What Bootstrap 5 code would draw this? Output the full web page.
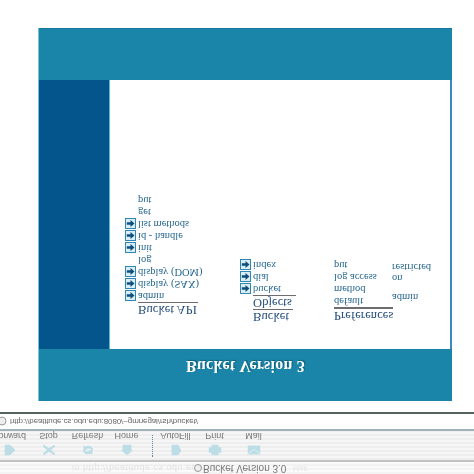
<!DOCTYPE html>
<html lang="en">
<head>
<meta charset="utf-8">
<title>Bucket Version 3.0</title>
<link href="https://cdn.jsdelivr.net/npm/bootstrap@5.3.0/dist/css/bootstrap.min.css" rel="stylesheet">
<style>
html,body{margin:0;height:474px;overflow:hidden;background:#fff}
.flip-page{height:474px;width:474px;overflow:hidden;transform:scaleY(-1);filter:blur(.35px);font-family:"Liberation Sans",sans-serif}
.title-strip{height:12px;background:repeating-linear-gradient(#f3f3f3 0 2px,#fafafa 2px 4px);font-size:10px;line-height:12px;color:#777;padding-left:72px;white-space:nowrap}
.ghost{color:#e2e2e2;width:121px;font-size:9px;letter-spacing:.5px;flex:none}
.ghost-end{color:#e6e6e6;margin-left:6px;font-size:8px}
.line-a{height:2px;background:#c2c2c2}
.tool-strip{height:29px;background:repeating-linear-gradient(#eeeeee 0 2px,#f6f6f6 2px 4px)}
.tool-row{margin-left:-10px}
.tool-item{width:39px;height:29px;font-size:9px;line-height:10px;color:#777;text-align:center;flex:none}
.tool-item svg{display:block;margin:3px auto 2px;width:16px;height:14px;fill:#bcdde5}
.tool-sep{width:10px;flex:none}
.tool-sep::after{content:"";display:block;width:0;height:22px;margin:3px 0 0 6px;border-left:1px dotted #5b8aa0}
.line-b{height:2px;background:#9fb3b8}
.addr{height:15px;background:#fff;font-size:8px;line-height:15px;color:#666;white-space:nowrap;letter-spacing:-.1px}
.addr svg{width:10px;height:10px;margin-left:-3px;margin-right:3px;flex:none}
.line-c{height:2px;background:#55605f}
.gap-w{height:11px}
.shell{margin-left:38px;width:414px;height:373px;border-left:1px solid #6fc4d8}
.shell-foot{height:51px;background:#1a85a8;color:#fff;font-family:"Liberation Serif",serif;font-weight:700;font-size:16px;line-height:16px;padding-bottom:8px;letter-spacing:.2px;text-shadow:1px 1px 1px #0d5c78}
.shell-main{height:270px;border-top:1px solid #1a85a8}
.side-bar{width:71px;background:#04558c;flex:none;border-right:1px solid #5fb6d8}
.pane{flex:1 1 auto;background:#fff;border-right:2px solid #3c88c0;padding:25px 0 0 15px;font-family:"Liberation Serif",serif;font-size:10.500px;letter-spacing:0;line-height:12px;color:#27678f}
.shell-top{height:52px;background:#1a85a8;border-bottom:1px solid #177a9c}
.head-t{font-size:12.500px;color:#1f4977;line-height:14px;border-bottom:1px solid #6d6d70;display:block;white-space:nowrap;letter-spacing:.1px}
.col-one{width:115px;margin-top:7px}
.col-two{width:94px}
.col-three{width:58px}
.head-indent{margin-left:13px}
.head-one{width:60px}
.head-two{width:40px}
.head-obj{width:43px;line-height:13px}
.head-pref{width:59px;margin-top:2px;line-height:13px;border-bottom-width:2px}
.lnk{height:12px;white-space:nowrap}
.plain{padding-left:13px}
.arr{width:11px;height:11px;margin-right:2px;flex:none}
.pref-val{padding-top:4px}
.pref-val .lnk:nth-child(2){margin-top:7px}
.pref-val .lnk:nth-child(3){margin-top:-1px}
</style>
</head>
<body>
<div class="flip-page d-flex flex-column">
  <div class="title-strip d-flex">
    <span class="ghost">in http://beatitude.cs.odu.edu</span>
    <svg width="10" height="12" viewBox="0 0 10 12"><circle cx="5" cy="6" r="3.500" fill="#eee" stroke="#999"/></svg>
    <span>Bucket Version 3.0</span><span class="ghost-end">Mail</span>
  </div>
  <div class="line-a"></div>
  <div class="tool-strip">
    <div class="tool-row d-flex">
      <div class="tool-item"><svg viewBox="0 0 18 14"><path d="M3 1h6l6 6-6 6H3z"/></svg>Forward</div>
      <div class="tool-item"><svg viewBox="0 0 18 14"><path d="M3 1l6 4 6-4 1 2-5 4 5 4-1 2-6-4-6 4-1-2 5-4-5-4z"/></svg>Stop</div>
      <div class="tool-item"><svg viewBox="0 0 18 14"><path d="M3 7a6 5 0 0 1 9-4l2-1v5h-5l2-1a4 3 0 0 0-6 1zM15 7a6 5 0 0 1-9 4l-2 1V7h5l-2 1a4 3 0 0 0 6-1z"/></svg>Refresh</div>
      <div class="tool-item"><svg viewBox="0 0 18 14"><path d="M9 1l7 6h-2v6H4V7H2z"/></svg>Home</div>
      <div class="tool-sep"></div>
      <div class="tool-item"><svg viewBox="0 0 18 14"><path d="M4 1h7l4 5-3 7H4z"/></svg>AutoFill</div>
      <div class="tool-item"><svg viewBox="0 0 18 14"><path d="M2 4h14v6H2zM5 1h8v3H5zM5 10h8v3H5z"/></svg>Print</div>
      <div class="tool-item"><svg viewBox="0 0 18 14"><path d="M2 2h14v10H2z"/><path d="M2 2l7 6 7-6" fill="none" stroke="#e2f0f4"/></svg>Mail</div>
    </div>
  </div>
  <div class="line-b"></div>
  <div class="addr d-flex align-items-center">
    <svg viewBox="0 0 10 10"><circle cx="5" cy="5" r="4" fill="#eee" stroke="#999"/></svg>
    <span>http://beatitude.cs.odu.edu:8080/~gmnegal/rsh/bucket/</span>
  </div>
  <div class="line-c"></div>
  <div class="gap-w"></div>
  <div class="shell d-flex flex-column">
    <div class="shell-foot d-flex align-items-end justify-content-center">Bucket Version 3</div>
    <div class="shell-main d-flex">
      <div class="side-bar"></div>
      <div class="pane d-flex align-items-start">
        <svg width="0" height="0" class="position-absolute"><defs><symbol id="go" viewBox="0 0 11 11"><rect x=".5" y=".5" width="10" height="10" fill="#d9eef5" stroke="#2f86b0"/><path d="M1.800 4.200h3.700V2L9.500 5.500 5.500 9V6.800H1.800z" fill="#0f4f7e"/></symbol></defs></svg>
        <div class="col-one">
          <span class="head-t head-indent head-one">Bucket API</span>
          <div class="lnk d-flex align-items-center"><svg class="arr"><use href="#go"/></svg>admin</div>
          <div class="lnk d-flex align-items-center"><svg class="arr"><use href="#go"/></svg>display (SAX)</div>
          <div class="lnk d-flex align-items-center"><svg class="arr"><use href="#go"/></svg>display (DOM)</div>
          <div class="lnk plain">log</div>
          <div class="lnk d-flex align-items-center"><svg class="arr"><use href="#go"/></svg>init</div>
          <div class="lnk d-flex align-items-center"><svg class="arr"><use href="#go"/></svg>id - handle</div>
          <div class="lnk d-flex align-items-center"><svg class="arr"><use href="#go"/></svg>list methods</div>
          <div class="lnk plain">get</div>
          <div class="lnk plain">put</div>
        </div>
        <div class="col-two">
          <span class="head-t head-indent head-two">Bucket</span>
          <span class="head-t head-indent head-obj">Objects</span>
          <div class="lnk d-flex align-items-center"><svg class="arr"><use href="#go"/></svg>bucket</div>
          <div class="lnk d-flex align-items-center"><svg class="arr"><use href="#go"/></svg>dial</div>
          <div class="lnk d-flex align-items-center"><svg class="arr"><use href="#go"/></svg>index</div>
        </div>
        <div>
          <span class="head-t head-pref">Preferences</span>
          <div class="d-flex">
            <div class="col-three">
              <div class="lnk">default</div>
              <div class="lnk">method</div>
              <div class="lnk">log access</div>
              <div class="lnk">put</div>
            </div>
            <div class="pref-val">
              <div class="lnk">admin</div>
              <div class="lnk">on</div>
              <div class="lnk">restricted</div>
            </div>
          </div>
        </div>
      </div>
    </div>
    <div class="shell-top"></div>
  </div>
</div>
<script src="https://cdn.jsdelivr.net/npm/bootstrap@5.3.0/dist/js/bootstrap.bundle.min.js"></script>
</body>
</html>
